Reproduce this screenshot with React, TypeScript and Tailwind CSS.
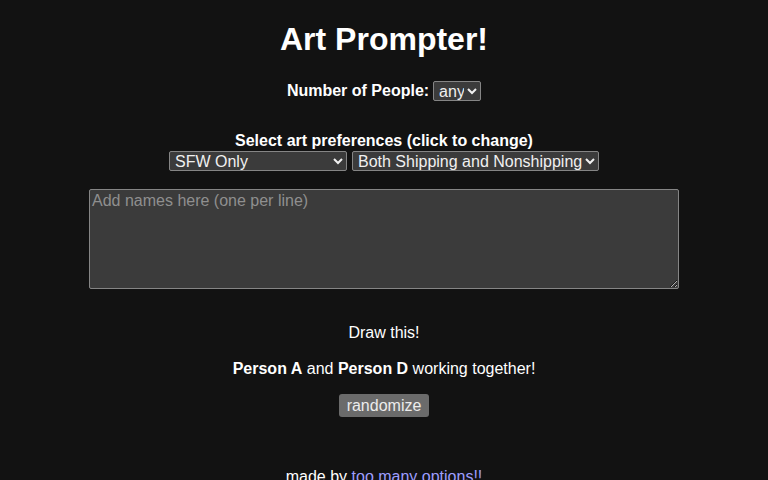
import React from "react";

export default function App() {
  return (
    <div
      className="min-h-[480px] w-full bg-[#121212] text-white [color-scheme:dark] flex flex-col items-center text-center text-[16px]"
      style={{ fontFamily: '"Liberation Sans", Arial, sans-serif' }}
    >
      <h1 className="mt-[21px] h-[37px] leading-[37px] text-[32px] font-bold">Art Prompter!</h1>

      <div className="mt-[22px] h-[21px] flex items-center gap-[4px]">
        <label className="font-bold leading-[18px]">Number of People:</label>
        <select className="h-[20px] w-[48px] bg-[#3b3b3b] border border-[#858585] rounded-[2px] text-[16px] leading-[18px] text-[#f0f0f0] pl-[1px]">
          <option>any</option>
          <option>1</option>
          <option>2</option>
          <option>3</option>
        </select>
      </div>

      <div className="mt-[31px] h-[18px] leading-[18px] font-bold">Select art preferences (click to change)</div>
      <div className="mt-[1px] h-[20px] flex items-center gap-[5px]">
        <select className="h-[20px] w-[178px] bg-[#3b3b3b] border border-[#858585] rounded-[2px] text-[16px] leading-[18px] text-[#f0f0f0] pl-[1px]">
          <option>SFW Only</option>
          <option>NSFW Allowed</option>
        </select>
        <select className="h-[20px] w-[247px] bg-[#3b3b3b] border border-[#858585] rounded-[2px] text-[16px] leading-[18px] text-[#f0f0f0] pl-[1px]">
          <option>Both Shipping and Nonshipping</option>
          <option>Shipping Only</option>
          <option>Nonshipping Only</option>
        </select>
      </div>

      <textarea
        placeholder="Add names here (one per line)"
        className="mt-[18px] h-[100px] w-[590px] bg-[#3b3b3b] border border-[#858585] rounded-[2px] px-[2px] py-[1px] text-[16px] leading-[20px] text-[#f0f0f0] placeholder:text-[#8f8f8f]"
      />

      <div className="mt-[35px] h-[18px] leading-[18px]">Draw this!</div>
      <div className="mt-[18px] h-[18px] leading-[18px]">
        <b>Person A</b> and <b>Person D</b> working together!
      </div>

      <button className="mt-[16px] h-[23px] px-[8px] bg-[#6b6b6b] rounded-[3px] text-[16px] leading-[18px] text-[#ececec]">
        randomize
      </button>

      <div className="mt-[51px] h-[18px] leading-[18px]">
        made by <a href="#" className="text-[#9e9eff] underline">too many options!!</a>
      </div>
    </div>
  );
}
